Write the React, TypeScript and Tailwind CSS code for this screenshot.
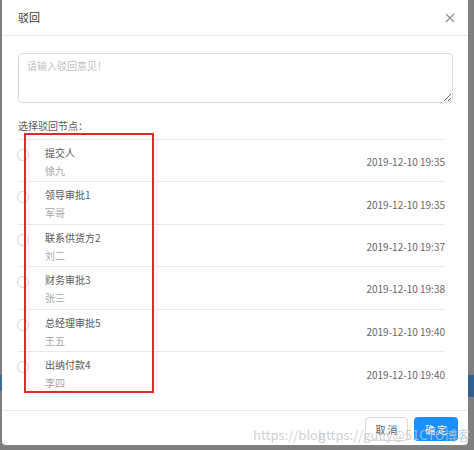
import React from "react";

const nodes = [
  { title: "提交人", name: "徐九", time: "2019-12-10 19:35" },
  { title: "领导审批1", name: "军哥", time: "2019-12-10 19:35" },
  { title: "联系供货方2", name: "刘二", time: "2019-12-10 19:37" },
  { title: "财务审批3", name: "张三", time: "2019-12-10 19:38" },
  { title: "总经理审批5", name: "王五", time: "2019-12-10 19:40" },
  { title: "出纳付款4", name: "李四", time: "2019-12-10 19:40" },
];

const font = { fontFamily: '"Noto Sans CJK SC", "Noto Sans", sans-serif' };

export default function App() {
  return (
    <div
      className="relative flex w-[474px] h-[450px] overflow-hidden bg-[#7f7f7f]"
      style={font}
    >
      {/* page behind the overlay, left strip */}
      <div className="w-[2px] shrink-0 pt-[375px]">
        <div className="h-[16px] bg-[#3f6a92]" />
      </div>

      {/* dialog */}
      <div className="w-[466px] h-[445px] shrink-0 bg-white rounded-b-[4px] flex flex-col">
        <div className="h-[36px] shrink-0 flex items-center justify-between pl-[16px] pr-[13px] border-b border-[#e8e8e8]">
          <span className="text-[11px] text-[#333]">驳回</span>
          <svg width="10" height="10" viewBox="0 0 10 10" className="text-[#8c8c8c]">
            <path d="M1 1L9 9M9 1L1 9" stroke="currentColor" strokeWidth="1.1" />
          </svg>
        </div>

        <div className="flex-1 pt-[17px] pl-[16px] pr-[15px]">
          <textarea
            className="block w-full h-[50px] rounded-[4px] border border-[#d9d9d9] px-[8px] py-[5px] text-[10px] leading-[14px] text-[#595959] placeholder:text-[#bfbfbf] outline-none"
            placeholder="请输入驳回意见！"
          />
          <div className="mt-[15px] h-[16px] text-[10px] leading-[16px] text-[#595959]">
            选择驳回节点：
          </div>
          <div className="mt-[5px] mr-[8px] border-t border-[#e8e8e8]">
            {nodes.map((n, i) => (
              <div
                key={n.title}
                className={
                  "h-[42.4px] flex items-center " +
                  (i < nodes.length - 1 ? "border-b border-[#e8e8e8]" : "")
                }
              >
                <div className="self-start mt-[9px] ml-[-1px] w-[12px] h-[12px] rounded-full border border-[#d4d4d4] bg-white shrink-0" />
                <div className="ml-[16px] flex flex-col self-start pt-[4px]">
                  <span className="text-[10px] leading-[18px] text-[#595959]">{n.title}</span>
                  <span className="text-[10px] leading-[18px] text-[#a6a6a6]">{n.name}</span>
                </div>
                <span className="ml-auto text-[10px] text-[#666] pt-[2px]">{n.time}</span>
              </div>
            ))}
          </div>
        </div>

        <div className="h-[35px] shrink-0 border-t border-[#e8e8e8] flex items-start justify-end gap-[6px] pt-[6px] pr-[10px]">
          <button className="w-[43px] h-[24px] rounded-[4px] border border-[#d9d9d9] bg-white text-[10px] text-[#595959]">
            取 消
          </button>
          <button className="w-[44px] h-[24px] rounded-[4px] bg-[#1890ff] text-[10px] text-white">
            确 定
          </button>
        </div>
      </div>

      {/* page behind the overlay, right strip */}
      <div className="w-[6px] shrink-0 pt-[375px]">
        <div className="h-[22px] bg-[#2f5f8d]" />
      </div>

      {/* red annotation box */}
      <div className="absolute left-[24px] top-[133px] w-[130px] h-[260px] border-2 border-[#e02a2a] pointer-events-none" />

      {/* watermark */}
      <div className="absolute left-[253px] top-[426px] text-[13px] leading-[18px] text-[#c4c4c4]/80 whitespace-nowrap pointer-events-none">
        https://blog
      </div>
      <div className="absolute left-[318px] top-[426px] text-[13px] leading-[18px] text-[#c4c4c4]/80 whitespace-nowrap pointer-events-none">
        https://guliy@51CTO博客
      </div>
    </div>
  );
}
